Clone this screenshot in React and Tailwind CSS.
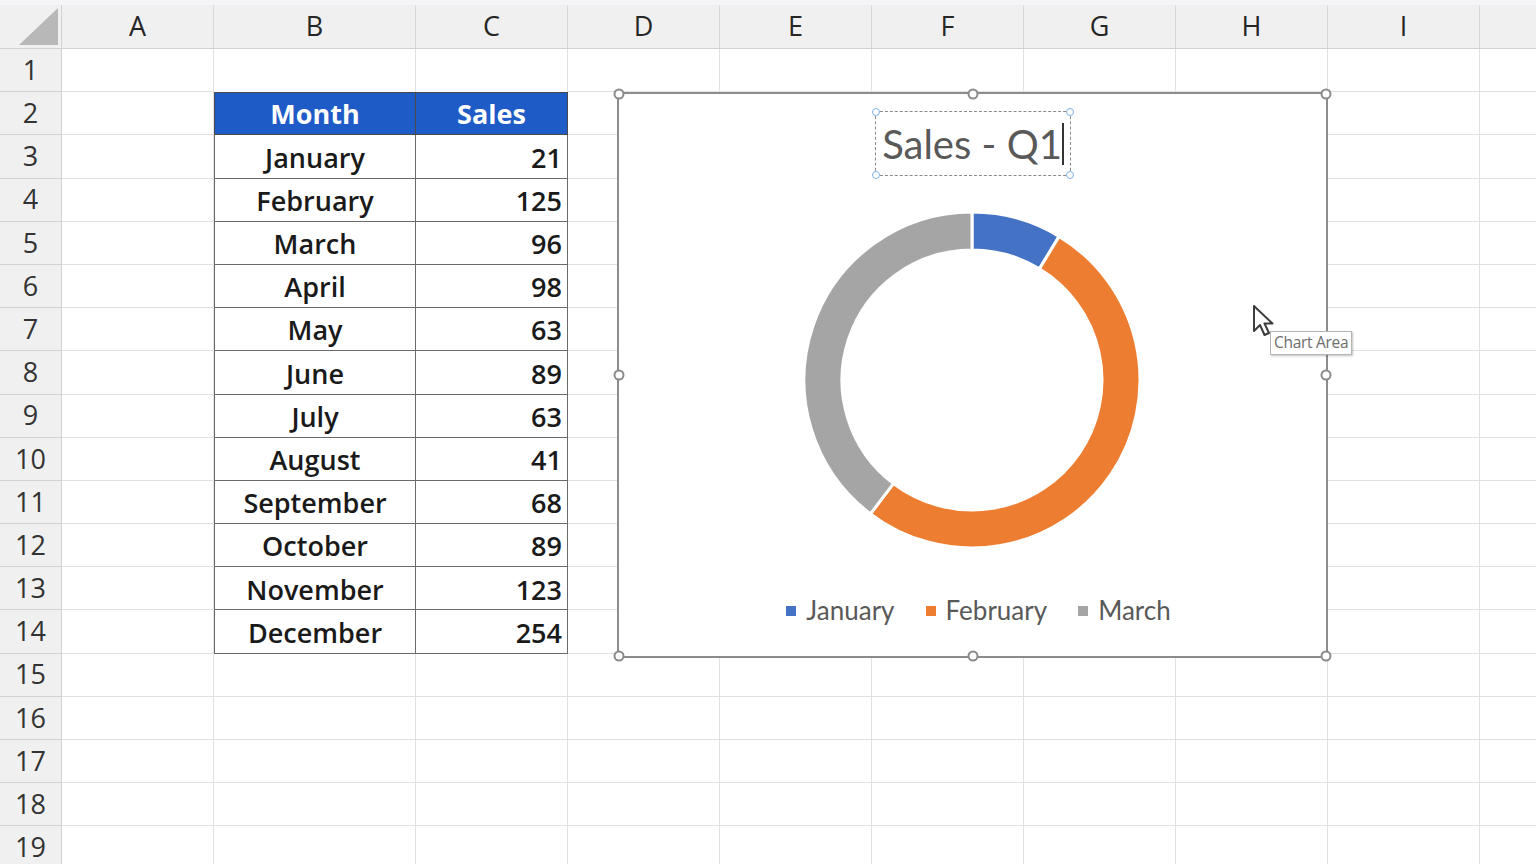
import React from 'react';

const COLS = ['A', 'B', 'C', 'D', 'E', 'F', 'G', 'H', 'I', ''];
const COL_W = [152, 202, 152, 152, 152, 152, 152, 152, 152, 152];

const DATA = [
  ['January', 21], ['February', 125], ['March', 96], ['April', 98], ['May', 63], ['June', 89],
  ['July', 63], ['August', 41], ['September', 68], ['October', 89], ['November', 123], ['December', 254],
];

const SLICES = [
  { name: 'January', value: 21, color: '#4472c4' },
  { name: 'February', value: 125, color: '#ed7d31' },
  { name: 'March', value: 96, color: '#a5a5a5' },
];

function arcPath(cx, cy, r0, r1, a0, a1) {
  const rad = (a) => ((a - 90) * Math.PI) / 180;
  const p = (r, a) => [cx + r * Math.cos(rad(a)), cy + r * Math.sin(rad(a))];
  const large = a1 - a0 > 180 ? 1 : 0;
  const [x1, y1] = p(r1, a0);
  const [x2, y2] = p(r1, a1);
  const [x3, y3] = p(r0, a1);
  const [x4, y4] = p(r0, a0);
  return `M${x1} ${y1} A${r1} ${r1} 0 ${large} 1 ${x2} ${y2} L${x3} ${y3} A${r0} ${r0} 0 ${large} 0 ${x4} ${y4} Z`;
}

function Donut() {
  const total = SLICES.reduce((s, d) => s + d.value, 0);
  let a = 0;
  return (
    <svg width="344" height="344" viewBox="0 0 344 344">
      {SLICES.map((s) => {
        const a0 = a;
        a += (s.value / total) * 360;
        return (
          <path key={s.name} d={arcPath(172, 172, 130, 168, a0, a)} fill={s.color} stroke="#fff" strokeWidth="3" />
        );
      })}
    </svg>
  );
}

function Handle({ className, blue }) {
  return (
    <div
      className={`absolute rounded-full bg-white -translate-x-1/2 -translate-y-1/2 ${
        blue ? 'border border-[#7fb2e5] w-[8px] h-[8px]' : 'border-2 border-[#8a8a8a] w-[11px] h-[11px]'
      } ${className}`}
    />
  );
}

function Chart() {
  return (
    <div className="absolute left-[617px] top-[92px] w-[711px] h-[566px] border-2 border-[#8c8c8c] bg-white">
      {/* title */}
      <div className="absolute left-[256px] top-[17px] w-[196px] h-[65px] border border-dashed border-[#8a8a8a] flex items-center justify-center">
        <span className="text-[40px] leading-none text-[#595959] pr-[2px]" style={{ fontFamily: 'Lato, sans-serif' }}>
          Sales - Q1
        </span>
        <span className="w-[2px] h-[42px] bg-[#333] -ml-[2px]" />
        <Handle blue className="left-0 top-0" />
        <Handle blue className="left-full top-0" />
        <Handle blue className="left-0 top-full" />
        <Handle blue className="left-full top-full" />
      </div>

      <div className="absolute left-[181px] top-[114px]">
        <Donut />
      </div>

      {/* legend */}
      <div
        className="absolute left-0 right-0 top-[497px] pl-[12px] flex justify-center gap-[31px] text-[26px] text-[#595959]"
        style={{ fontFamily: 'Lato, sans-serif' }}
      >
        {SLICES.map((s) => (
          <div key={s.name} className="flex items-center gap-[10px]">
            <span className="w-[10px] h-[10px]" style={{ backgroundColor: s.color }} />
            <span>{s.name}</span>
          </div>
        ))}
      </div>

      <Handle className="left-0 top-0" />
      <Handle className="left-1/2 top-0" />
      <Handle className="left-full top-0" />
      <Handle className="left-0 top-1/2" />
      <Handle className="left-full top-1/2" />
      <Handle className="left-0 top-full" />
      <Handle className="left-1/2 top-full" />
      <Handle className="left-full top-full" />
    </div>
  );
}

function Cursor() {
  return (
    <svg className="absolute left-[1251px] top-[303px]" width="28" height="36" viewBox="0 0 28 36">
      <path d="M3 3 L3 28 L9 22 L13.5 32 L18 30 L13.5 20.5 L21.5 20.5 Z" fill="#fff" stroke="#3c3c3c" strokeWidth="2" strokeLinejoin="round" />
    </svg>
  );
}

export default function App() {
  const rows = Array.from({ length: 19 }, (_, i) => i + 1);
  return (
    <div
      className="relative w-[1536px] h-[864px] overflow-hidden bg-white"
      style={{ fontFamily: '"Open Sans", sans-serif' }}
    >
      {/* column headers */}
      <div className="flex h-[49px] bg-[#f0f0f0] border-b border-[#d2d2d2] border-t-[5px] border-t-[#f5f5f7]">
        <div className="w-[62px] shrink-0 relative border-r border-[#d2d2d2]">
          <svg className="absolute left-[19px] top-[3px]" width="39" height="37" viewBox="0 0 39 37">
            <path d="M39 0 L39 37 L0 37 Z" fill="#b8b8b8" />
          </svg>
        </div>
        {COLS.map((c, i) => (
          <div
            key={i}
            className="shrink-0 flex items-center justify-center text-[27px] text-[#262626] border-r border-[#d8d8d8]"
            style={{ width: COL_W[i] }}
          >
            {c}
          </div>
        ))}
      </div>

      {/* rows */}
      {rows.map((r) => {
        const d = r >= 3 && r <= 14 ? DATA[r - 3] : null;
        return (
          <div key={r} className="flex h-[43.2px]">
            <div className="w-[62px] shrink-0 bg-[#f0f0f0] border-r border-b border-[#d2d2d2] flex items-center justify-center text-[27px] text-[#333]">
              {r}
            </div>
            {COL_W.map((w, ci) => {
              let cls = 'border-r border-b border-[#e1e1e1]';
              let content = null;
              if (r === 2 && (ci === 1 || ci === 2)) {
                cls = `bg-[#1f5bc6] text-white font-bold justify-center border-b border-[#4a4a4a] ${
                  ci === 1 ? 'border-l border-r border-t' : 'border-r border-t'
                } border-[#4a4a4a]`;
                content = ci === 1 ? 'Month' : 'Sales';
              } else if (d && ci === 1) {
                cls = 'border-l border-r border-b border-[#6a6a6a] justify-center text-[#1a1a1a] font-semibold pt-[3px]';
                content = d[0];
              } else if (d && ci === 2) {
                cls = 'border-r border-b border-[#6a6a6a] justify-end pr-[5px] text-[#1a1a1a] font-semibold pt-[3px]';
                content = d[1];
              } else if (r === 1 && (ci === 1 || ci === 2)) {
                cls = 'border-r border-[#e1e1e1]';
              }
              return (
                <div key={ci} className={`shrink-0 flex items-center text-[27px] ${cls}`} style={{ width: w }}>
                  {content}
                </div>
              );
            })}
          </div>
        );
      })}

      <Chart />
      <Cursor />

      {/* tooltip */}
      <div className="absolute left-[1270px] top-[331px] h-[24px] px-[3px] bg-white border border-[#b5b5b5] shadow-[1px_1px_2px_rgba(0,0,0,0.25)] flex items-center text-[15.5px] text-[#6d6d6d] tracking-[-0.3px]">
        Chart Area
      </div>
    </div>
  );
}
